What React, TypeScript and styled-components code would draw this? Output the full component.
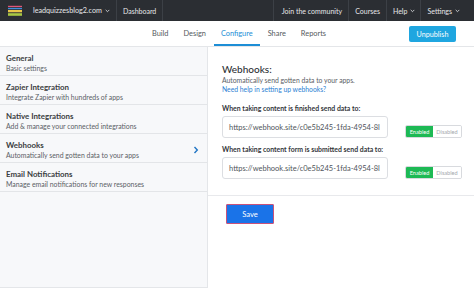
import React from "react";
import styled, { createGlobalStyle } from "styled-components";

const Global = createGlobalStyle`
  html, body { margin: 0; padding: 0; background: #fff; }
  body { font-family: Lato, "Noto Sans", sans-serif; color: #333; }
  * { box-sizing: border-box; }
`;

const Page = styled.div`
  width: 474px;
  height: 288px;
  display: flex;
  flex-direction: column;
  overflow: hidden;
`;

const TopBar = styled.div`
  height: 21px;
  background: #2b2e33;
  display: flex;
  align-items: stretch;
  color: #e6e7e9;
  font-size: 7px;
  padding-right: 9px;
`;

const LogoCell = styled.div`
  display: flex;
  align-items: center;
  padding: 0 6px 0 8px;
  gap: 11px;
  font-size: 7.2px;
`;

const Domain = styled.span`
  display: flex;
  align-items: center;
  gap: 3px;
`;

const NavCell = styled.div<{ $caret?: boolean; $wide?: boolean }>`
  display: flex;
  align-items: center;
  gap: 3px;
  padding: 0 ${(p) => (p.$caret ? "5px" : "6px")} 0 ${(p) => (p.$wide ? "8px" : "6px")};
  border-left: 1px solid #3c4046;
`;

const Spacer = styled.div`
  flex: 1;
  border-left: 1px solid #3c4046;
`;

const Caret = () => (
  <svg width="5" height="4" viewBox="0 0 5 4">
    <path d="M0.7 0.9 L2.5 2.7 L4.3 0.9" fill="none" stroke="#d7d8da" strokeWidth="0.9" />
  </svg>
);

const Logo = () => (
  <svg width="14" height="12" viewBox="0 0 14 12">
    <rect x="0" y="0.8" width="14" height="1.3" fill="#e0567a" />
    <rect x="0" y="2.9" width="14" height="1.3" fill="#3f8fdc" />
    <rect x="0" y="5" width="14" height="2.3" fill="#e9c64a" />
    <rect x="0" y="8.2" width="14" height="2.6" fill="#a9c844" />
  </svg>
);

const TabBar = styled.div`
  height: 26px;
  border-bottom: 1px solid #e4e6e9;
  display: flex;
  align-items: stretch;
  padding-left: 145px;
  padding-right: 18px;
`;

const Tab = styled.div<{ $active?: boolean }>`
  display: flex;
  align-items: center;
  padding: 2px 7px 0;
  margin-right: 1px;
  font-size: 7.4px;
  color: ${(p) => (p.$active ? "#1d8ed6" : "#555a60")};
  border-bottom: 2px solid ${(p) => (p.$active ? "#1d8ed6" : "transparent")};
`;

const TabSpacer = styled.div`
  flex: 1;
`;

const Unpublish = styled.button`
  align-self: center;
  margin-top: 1px;
  width: 47px;
  height: 16px;
  border: none;
  border-radius: 2px;
  background: #1fa6e0;
  color: #fff;
  font-family: inherit;
  font-size: 7.2px;
  padding: 0;
`;

const Main = styled.div`
  flex: 1;
  display: flex;
  min-height: 0;
`;

const Sidebar = styled.div`
  width: 210px;
  background: #f7f8fa;
  border-right: 1px solid #e4e6e9;
  border-bottom: 1px solid #e4e6e9;
  display: flex;
  flex-direction: column;
`;

const Item = styled.div`
  height: 29px;
  border-bottom: 1px solid #e3e5e8;
  padding: 4px 0 0 6px;
  display: flex;
  align-items: center;
  justify-content: space-between;
`;

const ItemText = styled.div`
  display: flex;
  flex-direction: column;
  gap: 1px;
`;

const ItemTitle = styled.div`
  font-size: 7.9px;
  font-weight: 700;
  color: #3a3d41;
  line-height: 10px;
`;

const ItemSub = styled.div`
  font-size: 6.9px;
  color: #5b6066;
  line-height: 9px;
`;

const ChevronIcon = styled.svg`
  margin-right: 8px;
`;

const Chevron = () => (
  <ChevronIcon width="6" height="8" viewBox="0 0 6 8">
    <path d="M1.5 1 L4.3 4 L1.5 7" fill="none" stroke="#2175c4" strokeWidth="1.4" />
  </ChevronIcon>
);

const Content = styled.div`
  flex: 1;
  display: flex;
  flex-direction: column;
`;

const Section = styled.div`
  padding: 16px 12px 16px 14px;
  border-bottom: 1px solid #e8e9ec;
`;

const Heading = styled.div`
  font-size: 10px;
  font-weight: 500;
  color: #2d3034;
  line-height: 12px;
`;

const Desc = styled.div`
  font-size: 6.8px;
  color: #5b6066;
  line-height: 9px;
  margin-top: 1px;
`;

const HelpLink = styled.a`
  display: block;
  font-size: 6.8px;
  color: #2d7fd3;
  line-height: 9px;
  text-decoration: none;
`;

const Label = styled.div<{ $first?: boolean }>`
  font-size: 6.9px;
  font-weight: 700;
  color: #33363a;
  line-height: 9px;
  margin-top: ${(p) => (p.$first ? "10px" : "7px")};
`;

const Row = styled.div`
  display: flex;
  align-items: flex-end;
  margin-top: 3px;
`;

const Input = styled.div`
  width: 166px;
  height: 22px;
  border: 1px solid #dcdee2;
  border-radius: 3px;
  padding-left: 6px;
  display: flex;
  align-items: center;
  font-size: 7.5px;
  color: #50555b;
  white-space: nowrap;
  overflow: hidden;
`;

const Toggle = styled.div`
  display: flex;
  margin-left: 17px;
  height: 13px;
  border: 1px solid #d8dade;
  border-radius: 2px;
  overflow: hidden;
`;

const ToggleOpt = styled.div<{ $on?: boolean }>`
  width: ${(p) => (p.$on ? "27px" : "28px")};
  display: flex;
  align-items: center;
  justify-content: center;
  font-size: 5.6px;
  background: ${(p) => (p.$on ? "#1db954" : "#fff")};
  color: ${(p) => (p.$on ? "#fff" : "#a4a8ad")};
`;

const Footer = styled.div`
  display: flex;
  padding: 8px 0 0 18px;
`;

const SaveButton = styled.button`
  width: 48px;
  height: 20px;
  border: 1px solid #c9527a;
  border-radius: 1px;
  background: #1a73e8;
  color: #fff;
  font-family: inherit;
  font-size: 7.6px;
  padding: 0;
`;

const items = [
  { t: "General", s: "Basic settings" },
  { t: "Zapier Integration", s: "Integrate Zapier with hundreds of apps" },
  { t: "Native Integrations", s: "Add & manage your connected integrations" },
  { t: "Webhooks", s: "Automatically send gotten data to your apps", active: true },
  { t: "Email Notifications", s: "Manage email notifications for new responses" },
];

const url = "https://webhook.site/c0e5b245-1fda-4954-8l";

export default function App() {
  return (
    <Page>
      <Global />
      <TopBar>
        <LogoCell>
          <Logo />
          <Domain>
            <span>leadquizzesblog2.com</span>
            <Caret />
          </Domain>
        </LogoCell>
        <NavCell>Dashboard</NavCell>
        <Spacer />
        <NavCell $wide>Join the community</NavCell>
        <NavCell>Courses</NavCell>
        <NavCell $caret>
          <span>Help</span>
          <Caret />
        </NavCell>
        <NavCell $caret>
          <span>Settings</span>
          <Caret />
        </NavCell>
      </TopBar>
      <TabBar>
        <Tab>Build</Tab>
        <Tab>Design</Tab>
        <Tab $active>Configure</Tab>
        <Tab>Share</Tab>
        <Tab>Reports</Tab>
        <TabSpacer />
        <Unpublish>Unpublish</Unpublish>
      </TabBar>
      <Main>
        <Sidebar>
          {items.map((it) => (
            <Item key={it.t}>
              <ItemText>
                <ItemTitle>{it.t}</ItemTitle>
                <ItemSub>{it.s}</ItemSub>
              </ItemText>
              {it.active && <Chevron />}
            </Item>
          ))}
        </Sidebar>
        <Content>
          <Section>
            <Heading>Webhooks:</Heading>
            <Desc>Automatically send gotten data to your apps.</Desc>
            <HelpLink>Need help in setting up webhooks?</HelpLink>
            <Label $first>When taking content is finished send data to:</Label>
            <Row>
              <Input>{url}</Input>
              <Toggle>
                <ToggleOpt $on>Enabled</ToggleOpt>
                <ToggleOpt>Disabled</ToggleOpt>
              </Toggle>
            </Row>
            <Label>When taking content form is submitted send data to:</Label>
            <Row>
              <Input>{url}</Input>
              <Toggle>
                <ToggleOpt $on>Enabled</ToggleOpt>
                <ToggleOpt>Disabled</ToggleOpt>
              </Toggle>
            </Row>
          </Section>
          <Footer>
            <SaveButton>Save</SaveButton>
          </Footer>
        </Content>
      </Main>
    </Page>
  );
}
